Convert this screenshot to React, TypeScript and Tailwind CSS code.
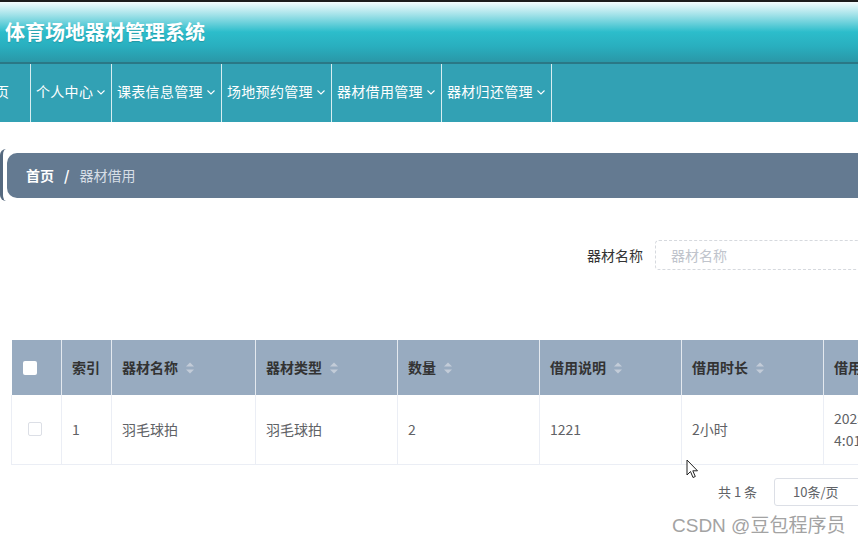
import React from "react";

const font = { fontFamily: '"Noto Sans CJK SC", "Noto Sans", sans-serif' };

function Chevron() {
  return (
    <svg width="10" height="10" viewBox="0 0 10 10" className="ml-[3px] mt-[1px] shrink-0">
      <path d="M1.5 3.5 L5 7 L8.5 3.5" fill="none" stroke="white" strokeWidth="1.1" />
    </svg>
  );
}

function Sort() {
  return (
    <svg width="10" height="14" viewBox="0 0 10 14" className="ml-[7px]">
      <path d="M5 1.5 L9 5.5 L1 5.5 Z" fill="#c3ccd8" />
      <path d="M5 12.5 L9 8.5 L1 8.5 Z" fill="#c3ccd8" />
    </svg>
  );
}

const navItems = [
  { t: "个人中心", w: "w-[81px]" },
  { t: "课表信息管理", w: "w-[110px]" },
  { t: "场地预约管理", w: "w-[110px]" },
  { t: "器材借用管理", w: "w-[110px]" },
  { t: "器材归还管理", w: "w-[110px]" },
];

const cols = [
  { t: "器材名称", w: 144 },
  { t: "器材类型", w: 142 },
  { t: "数量", w: 142 },
  { t: "借用说明", w: 142 },
  { t: "借用时长", w: 142 },
];

export default function App() {
  return (
    <div className="relative w-[858px] h-[543px] overflow-hidden bg-white" style={font}>
      <div className="h-[2px] bg-[#1c1c1c]" />
      <div className="h-[60px] flex items-center pl-[5px] pb-[1px] bg-[linear-gradient(180deg,#f4fcfd_0%,#9fe1e8_22%,#2cbdcb_50%,#29aebe_75%,#2a97a7_100%)]">
        <span className="text-white font-bold text-[20px] [text-shadow:0_1px_1px_rgba(0,0,0,0.15)]">体育场地器材管理系统</span>
      </div>
      <div className="h-[2px] bg-[#2a7886]" />
      <div className="h-[58px] bg-[#32a1b4] flex">
        <div className="w-[31px] overflow-hidden flex items-center pb-[3px] border-r border-[#d8eef1]">
          <span className="shrink-0 ml-[-19px] text-white text-[14px] whitespace-nowrap">首页</span>
        </div>
        {navItems.map((n) => (
          <div key={n.t} className={`${n.w} flex items-center pl-[5px] pb-[3px] border-r border-[#d8eef1]`}>
            <span className="text-white text-[14px] whitespace-nowrap tracking-[0.3px]">{n.t}</span>
            <Chevron />
          </div>
        ))}
      </div>

      <div className="mt-[28px] flex items-stretch">
        <div className="w-[6px] h-[52px] border-l-[3px] border-[#55697f] rounded-l-[14px] -mt-[1px]" />
        <div className="flex-1 h-[45px] mt-[3px] ml-[1px] bg-[#647a91] rounded-l-[10px] flex items-center pl-[19px] pb-[1px] text-[14px]">
          <span className="text-white font-bold">首页</span>
          <span className="text-white font-bold mx-[10px]">/</span>
          <span className="text-[#d7dee6]">器材借用</span>
        </div>
      </div>

      <div className="mt-[38px] flex items-center pl-[587px] h-[32px]">
        <span className="text-[14px] text-[#333] mr-[12px] whitespace-nowrap shrink-0">器材名称</span>
        <div className="w-[230px] h-[30px] border border-dashed border-[#d6d9de] rounded-[4px] flex items-center pl-[15px] text-[14px] text-[#c0c4cc] shrink-0 whitespace-nowrap">
          器材名称
        </div>
      </div>

      <div className="mt-[69px] ml-[11px] w-[1000px]">
        <table className="border-collapse table-fixed" style={{ width: 1000 }}>
          <colgroup>
            <col style={{ width: 50 }} />
            <col style={{ width: 50 }} />
            {cols.map((c) => (
              <col key={c.t} style={{ width: c.w }} />
            ))}
            <col style={{ width: 188 }} />
          </colgroup>
          <thead>
            <tr className="h-[55px] bg-[#98abc0]">
              <th className="border-r border-[#e4e9ef] text-left pl-[11px]">
                <div className="w-[14px] h-[14px] bg-white rounded-[2px]" />
              </th>
              <th className="border-r border-[#e4e9ef] text-left pl-[10px] text-[14px] font-bold text-[#333]">索引</th>
              {cols.map((c) => (
                <th key={c.t} className="border-r border-[#e4e9ef] text-left pl-[10px] font-bold text-[14px] text-[#333]">
                  <div className="flex items-center">
                    <span>{c.t}</span>
                    <Sort />
                  </div>
                </th>
              ))}
              <th className="text-left pl-[10px] font-bold text-[14px] text-[#333] whitespace-nowrap">借用时间</th>
            </tr>
          </thead>
          <tbody>
            <tr className="h-[69px] border-b border-[#ebeef5]">
              <td className="border-r border-l border-[#ebeef5] text-center">
                <div className="w-[14px] h-[14px] border border-[#dcdfe6] rounded-[2px] bg-white ml-[16px]" />
              </td>
              <td className="border-r border-[#ebeef5] pl-[10px] text-[14px] text-[#606266]">1</td>
              <td className="border-r border-[#ebeef5] pl-[10px] text-[14px] text-[#606266]">羽毛球拍</td>
              <td className="border-r border-[#ebeef5] pl-[10px] text-[14px] text-[#606266]">羽毛球拍</td>
              <td className="border-r border-[#ebeef5] pl-[10px] text-[14px] text-[#606266]">2</td>
              <td className="border-r border-[#ebeef5] pl-[10px] text-[14px] text-[#606266]">1221</td>
              <td className="border-r border-[#ebeef5] pl-[10px] text-[14px] text-[#606266]">2小时</td>
              <td className="pl-[10px] text-[14px] text-[#606266] leading-[22px]">
                <div>2023-03-24</div>
                <div>4:01:32</div>
              </td>
            </tr>
          </tbody>
        </table>
      </div>

      <div className="mt-[13px] flex items-center pl-[718px]">
        <span className="text-[13px] text-[#606266] whitespace-nowrap">共 1 条</span>
        <div className="ml-[17px] w-[100px] h-[28px] shrink-0 border border-[#dcdfe6] rounded-[3px] flex items-center pl-[18px] text-[13px] text-[#606266] whitespace-nowrap">
          10条/页
        </div>
      </div>

      <div className="absolute left-[672px] top-[512px] text-[19px] text-[#a3a3a3] whitespace-nowrap [text-shadow:0_0_2px_#ffffff]" style={{ fontFamily: '"Liberation Sans", "Noto Sans CJK SC", sans-serif' }}>
        CSDN @豆包程序员
      </div>

      <svg className="absolute left-[686px] top-[459px]" width="13" height="20" viewBox="0 0 13 20">
        <path d="M1 1 L1 16 L4.5 12.5 L7 18.5 L9.3 17.5 L6.8 11.8 L11.5 11.8 Z" fill="white" stroke="#222" strokeWidth="1" strokeLinejoin="round" />
      </svg>
    </div>
  );
}
